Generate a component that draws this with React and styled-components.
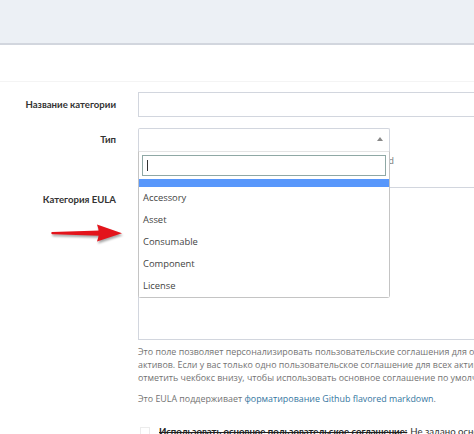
import React from "react";
import styled, { createGlobalStyle } from "styled-components";

const GlobalStyle = createGlobalStyle`
  html, body {
    margin: 0;
    padding: 0;
    background: #fff;
    overflow: hidden;
  }
  body {
    font-family: "Open Sans", "Noto Sans", sans-serif;
    color: #333;
  }
`;

const Page = styled.div`
  width: 474px;
  height: 434px;
  overflow: hidden;
`;

const TopBar = styled.div`
  height: 43px;
  background: #ecf0f5;
  border-bottom: 2px solid #d2d6de;
`;

const BoxHeader = styled.div`
  height: 36px;
  border-bottom: 1px solid #f4f4f4;
`;

const Form = styled.div`
  padding-top: 10px;
`;

const Row = styled.div`
  position: relative;
  display: grid;
  grid-template-columns: 116px 460px;
  column-gap: 22px;
  margin-top: ${(p) => p.gap || 0}px;
`;

const Label = styled.div`
  text-align: right;
  font-family: "Lato", "Open Sans", sans-serif;
  font-weight: 700;
  font-size: 9.6px;
  color: #333;
  line-height: ${(p) => p.lh || 25}px;
  padding-top: ${(p) => p.pt || 0}px;
  white-space: nowrap;
`;

const TextInput = styled.div`
  height: 25px;
  box-sizing: border-box;
  border: 1px solid #d2d6de;
  background: #fff;
`;

const SelectWrap = styled.div`
  position: relative;
  width: 252px;
`;

const SelectBox = styled.div`
  height: 23px;
  box-sizing: border-box;
  border: 1px solid #d2d6de;
  border-bottom: none;
  border-radius: 2px 2px 0 0;
  background: #fff;
  display: flex;
  align-items: center;
  justify-content: flex-end;
  padding-right: 6px;
`;

const Caret = styled.span`
  width: 0;
  height: 0;
  border-left: 3px solid transparent;
  border-right: 3px solid transparent;
  border-bottom: 4px solid #888;
  margin-top: -2px;
`;

const Help = styled.div`
  font-size: 8.9px;
  line-height: 13px;
  color: #737373;
  white-space: nowrap;
`;

const HiddenHelp = styled(Help)`
  width: 256px;
  text-align: right;
  margin-top: 3px;
  overflow: hidden;
`;

const Dropdown = styled.div`
  position: absolute;
  top: 100%;
  left: 0;
  width: 252px;
  box-sizing: border-box;
  background: #fff;
  border: 1px solid #c4c4c4;
  border-top: 1px solid #e4e4e4;
  border-radius: 0 0 3px 3px;
  z-index: 5;
`;

const Search = styled.div`
  margin: 3px 3px 3px;
  height: 21px;
  box-sizing: border-box;
  border: 1px solid #8fa8a5;
  display: flex;
  align-items: center;
  padding-left: 4px;
`;

const Cursor = styled.span`
  width: 1px;
  height: 11px;
  background: #333;
`;

const Option = styled.div`
  height: ${(p) => (p.highlighted ? 8 : 22)}px;
  line-height: 22px;
  padding-left: 4px;
  font-size: 9.4px;
  color: #444;
  background: ${(p) => (p.highlighted ? "#5897fb" : "#fff")};
`;

const TextArea = styled.div`
  height: 153px;
  box-sizing: border-box;
  border: 1px solid #d2d6de;
  background: #fff;
`;

const Paragraph = styled(Help)`
  margin-top: ${(p) => p.mt || 0}px;
`;

const Link = styled.span`
  color: #35779f;
`;

const CheckRow = styled.div`
  margin-top: 20px;
  display: flex;
  align-items: center;
  font-size: 9.6px;
  line-height: 13px;
  white-space: nowrap;
`;

const CheckBox = styled.span`
  width: 10px;
  height: 10px;
  box-sizing: border-box;
  border: 1px solid #ececec;
  margin: 0 9px 0 2px;
  flex-shrink: 0;
`;

const CheckLabel = styled.span`
  font-family: "Lato", "Open Sans", sans-serif;
  font-weight: 700;
  color: #222;
  text-decoration: line-through;
`;

const CheckNote = styled.span`
  font-family: "Lato", "Open Sans", sans-serif;
  color: #333;
  margin-left: 3px;
`;

const Arrow = styled.svg`
  position: absolute;
  left: 50px;
  top: 36px;
  filter: drop-shadow(1px 2px 1px rgba(0, 0, 0, 0.35));
`;

const options = ["Accessory", "Asset", "Consumable", "Component", "License"];

export default function App() {
  return (
    <Page>
      <GlobalStyle />
      <TopBar />
      <BoxHeader />
      <Form>
        <Row>
          <Label>Название категории</Label>
          <TextInput />
        </Row>

        <Row gap={11}>
          <Label lh={23}>Тип</Label>
          <div>
            <SelectWrap>
              <SelectBox>
                <Caret />
              </SelectBox>
              <Dropdown>
                <Search>
                  <Cursor />
                </Search>
                <Option highlighted />
                {options.map((o) => (
                  <Option key={o}>{o}</Option>
                ))}
              </Dropdown>
            </SelectWrap>
            <HiddenHelp>Тип нельзя изменить: Category field</HiddenHelp>
          </div>
        </Row>

        <Row gap={20}>
          <Label lh={13} pt={6}>
            Категория EULA
          </Label>
          <div>
            <TextArea />
            <Paragraph mt={5}>
              Это поле позволяет персонализировать пользовательские соглашения для определённых типов
              <br />
              активов. Если у вас только одно пользовательское соглашение для всех активов, вы можете
              <br />
              отметить чекбокс внизу, чтобы использовать основное соглашение по умолчанию.
            </Paragraph>
            <Paragraph mt={8}>
              Это EULA поддерживает <Link>форматирование Github flavored markdown</Link>.
            </Paragraph>
            <CheckRow>
              <CheckBox />
              <CheckLabel>Использовать основное пользовательское соглашение:</CheckLabel>
              <CheckNote>Не задано основное пользовательское соглашение.</CheckNote>
            </CheckRow>
          </div>
          <Arrow width="74" height="20" viewBox="0 0 74 20">
            <path d="M2 9 L50 7.6 L50 12.8 L2 11.2 Q0.4 10.1 2 9 Z" fill="#e3141b" />
            <path d="M47 1.5 L72 10.2 L47 18.5 Q50.5 10.2 47 1.5 Z" fill="#e3141b" />
          </Arrow>
        </Row>
      </Form>
    </Page>
  );
}
